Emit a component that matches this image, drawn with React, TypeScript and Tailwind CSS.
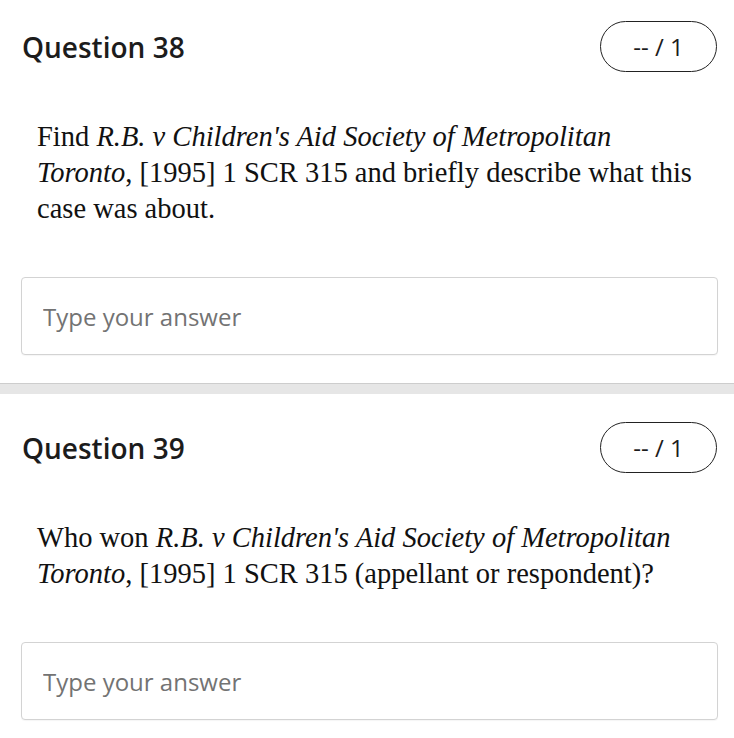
import React from 'react';

type QuestionProps = {
  number: number;
  children: React.ReactNode;
  first?: boolean;
};

function Question({ number, children, first }: QuestionProps) {
  return (
    <section className={first ? 'pt-[21px] pb-[28px]' : 'pt-[28px] pb-[18px]'}>
      {/* Header */}
      <div className="flex items-center justify-between pl-[22px] pr-[17px]">
        <h2 className="font-['Open_Sans',sans-serif] text-[28px] font-semibold text-[#1c1c1c] leading-none">
          Question {number}
        </h2>
        <div className="flex h-[51px] w-[117px] items-center justify-center rounded-full border-[1.5px] border-[#222]">
          <span className="font-['Open_Sans',sans-serif] text-[24px] text-[#1c1c1c] leading-none">-- / 1</span>
        </div>
      </div>

      {/* Prompt */}
      <p className="mt-[47px] pl-[37px] pr-[36px] font-['Liberation_Serif','Times_New_Roman',serif] text-[28.5px] leading-[36px] text-[#111]">
        {children}
      </p>

      {/* Answer */}
      <div className="mt-[50px] pl-[21px] pr-[16px]">
        <input
          type="text"
          placeholder="Type your answer"
          className="block h-[78px] w-full rounded-[4px] border border-[#d3d3d3] bg-white px-[21px] font-['Open_Sans',sans-serif] text-[24px] text-[#222] shadow-[0_1px_1px_rgba(0,0,0,0.04)] outline-none placeholder:text-[#737373]"
        />
      </div>
    </section>
  );
}

export default function App() {
  return (
    <div className="min-h-screen w-full bg-white">
      <Question number={38} first>
        Find <i>R.B. v Children's Aid Society of Metropolitan Toronto</i>, [1995] 1 SCR 315 and briefly describe what this
        case was about.
      </Question>

      <div className="h-[11px] border-t border-[#cdcdcd] bg-[#e6e6e6]" />

      <Question number={39}>
        Who won <i>R.B. v Children's Aid Society of Metropolitan Toronto</i>, [1995] 1 SCR 315 (appellant or respondent)?
      </Question>
    </div>
  );
}
